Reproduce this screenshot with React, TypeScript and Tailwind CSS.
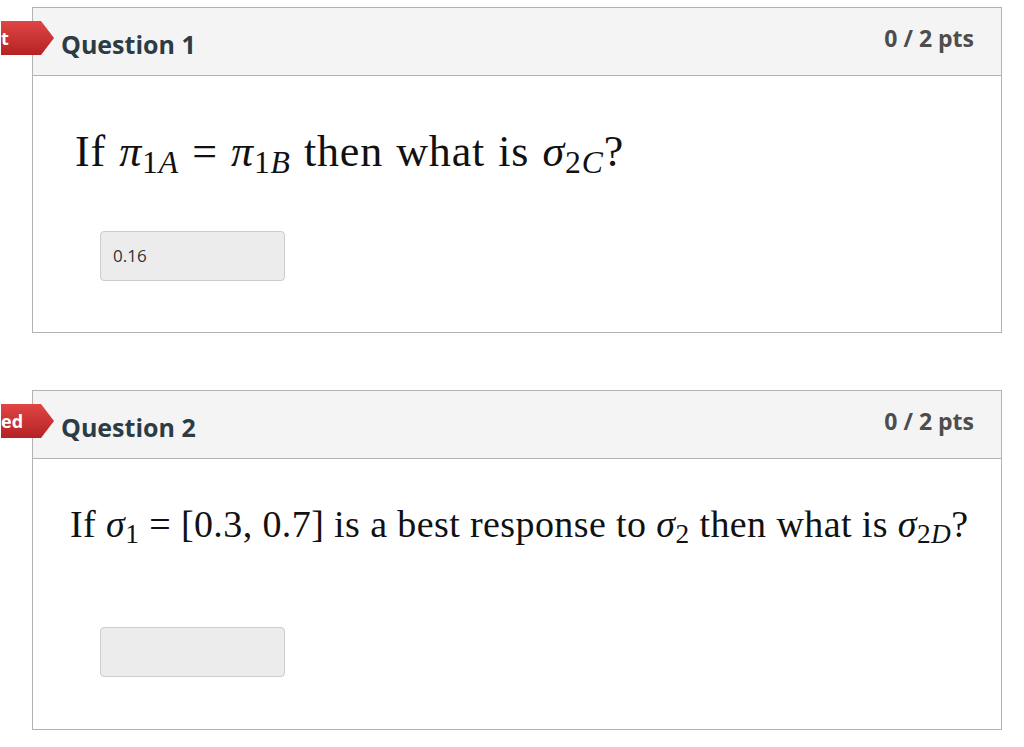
import React from 'react';

const sans = { fontFamily: '"Open Sans", "Liberation Sans", sans-serif' };
const serif = { fontFamily: '"Liberation Serif", "Times New Roman", serif' };

// status ribbon sticking out on the left of each question card (cut by the window edge)
function Badge({ label }: { label: string }) {
  return (
    <div
      className="absolute left-[-32px] top-[13px] h-[34px] w-[53px] flex items-center text-white font-bold text-[18px] leading-none bg-gradient-to-b from-[#e04545] to-[#b52222] [clip-path:polygon(0_0,40px_0,100%_50%,40px_100%,0_100%)]"
      style={sans}
    >
      {label}
    </div>
  );
}

function Header({ title }: { title: string }) {
  return (
    <div
      className="h-[68px] bg-[#f4f4f4] border-b border-[#b3b3b3] flex justify-between items-start pl-[28px] pr-[27px]"
      style={sans}
    >
      <h2 className="pt-[20px] text-[25px] leading-[33px] font-bold text-[#2d3b45]">{title}</h2>
      <div className="pt-[15px] text-[23px] leading-[30px] font-bold text-[#4d4d4d]">0 / 2 pts</div>
    </div>
  );
}

function Sub({ children }: { children: React.ReactNode }) {
  return <sub className="text-[0.72em] leading-none relative top-[0.22em] not-italic">{children}</sub>;
}

function AnswerBox({ value }: { value?: string }) {
  return (
    <div
      className="w-[185px] h-[50px] ml-[67px] rounded-[4px] border border-[#cccccc] bg-[#ececec] flex items-center px-[12px] text-[17px] text-[#333]"
      style={sans}
    >
      {value}
    </div>
  );
}

export default function App() {
  return (
    <div className="min-h-screen bg-white pt-[7px] pl-[32px] overflow-hidden flex flex-col gap-[57px]">
      <div className="relative w-[970px] border border-[#b3b3b3]">
        <Badge label="t" />
        <Header title="Question 1" />
        <div className="h-[256px] pt-[56px] flex flex-col gap-[59px]">
          <div
            className="h-[40px] leading-[40px] text-[44px] tracking-[0.8px] [word-spacing:1.5px] text-[#111] whitespace-nowrap pl-[42px]"
            style={serif}
          >
            If <i>π</i><Sub>1<i>A</i></Sub> = <i>π</i><Sub>1<i>B</i></Sub> then what is <i>σ</i><Sub>2<i>C</i></Sub>?
          </div>
          <AnswerBox value="0.16" />
        </div>
      </div>

      <div className="relative w-[970px] border border-[#b3b3b3]">
        <Badge label="ed" />
        <Header title="Question 2" />
        <div className="h-[270px] pt-[45px] flex flex-col gap-[83px]">
          <div
            className="h-[40px] leading-[40px] text-[38px] tracking-[0.4px] text-[#111] whitespace-nowrap pl-[37px]"
            style={serif}
          >
            If <i>σ</i><Sub>1</Sub> = [0.3, 0.7] is a best response to <i>σ</i><Sub>2</Sub> then what is <i>σ</i><Sub>2<i>D</i></Sub>?
          </div>
          <AnswerBox />
        </div>
      </div>
    </div>
  );
}
